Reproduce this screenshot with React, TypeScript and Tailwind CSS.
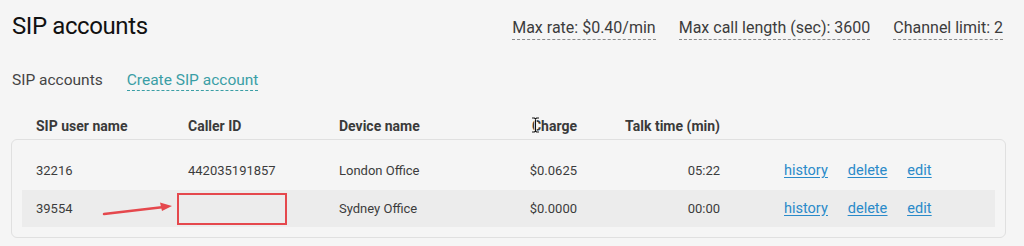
import React from "react";

const rows = [
  { user: "32216", caller: "442035191857", device: "London Office", charge: "$0.0625", talk: "05:22" },
  { user: "39554", caller: "", device: "Sydney Office", charge: "$0.0000", talk: "00:00" },
];

function Limit({ children }: { children: React.ReactNode }) {
  return (
    <span className="border-b border-dashed border-[#8a8a8a] pb-[1px] text-[#3c3c3c]">{children}</span>
  );
}

export default function App() {
  return (
    <div
      className="h-[246px] w-[1024px] overflow-hidden bg-[#f5f5f5] text-[#333]"
      style={{ fontFamily: "Roboto, 'Liberation Sans', sans-serif" }}
    >
      <div className="flex items-start justify-between pl-[12px] pr-[21px] pt-[10px]">
        <h1 className="text-[24px] leading-[32px] tracking-[-0.4px] text-[#111]">SIP accounts</h1>
        <div className="mt-[8px] flex gap-[23px] text-[16px] leading-[20px]">
          <Limit>Max rate: $0.40/min</Limit>
          <Limit>Max call length (sec): 3600</Limit>
          <Limit>Channel limit: 2</Limit>
        </div>
      </div>

      <div className="mt-[28px] flex gap-[24px] pl-[12px] text-[15.5px] leading-[20px]">
        <span className="text-[#444]">SIP accounts</span>
        <span className="border-b border-dashed border-[#3a9ea5] text-[#3a9ea5]">Create SIP account</span>
      </div>

      <div className="mt-[27px] flex pl-[36px] text-[14px] font-bold leading-[16px] text-[#3a3a3a]">
        <div className="w-[152px]">SIP user name</div>
        <div className="w-[151px]">Caller ID</div>
        <div className="w-[150px]">Device name</div>
        <div className="relative w-[88px] text-right">
          Charge
          <svg className="absolute left-[42px] top-[-1px]" width="9" height="16" viewBox="0 0 9 16">
            <path d="M1 1h2.5l1 1 1-1H8M4.5 2v12M1 15h2.5l1-1 1 1H8" fill="none" stroke="#fff" strokeWidth="2.4" />
            <path d="M1 1h2.5l1 1 1-1H8M4.5 2v12M1 15h2.5l1-1 1 1H8" fill="none" stroke="#111" strokeWidth="1.1" />
          </svg>
        </div>
        <div className="w-[143px] text-right">Talk time (min)</div>
      </div>

      <div className="ml-[11px] mr-[18px] mt-[5px] rounded-[6px] border border-[#e0e0e0] px-[10px] pb-[10px] pt-[12px] text-[13px] leading-[16px] text-[#3c3c3c]">
        {rows.map((r, i) => (
          <div
            key={r.user}
            className={`relative flex items-center pl-[14px] ${i === 1 ? "h-[37px] bg-[#ececec]" : "h-[38px]"}`}
          >
            <div className="w-[152px]">{r.user}</div>
            <div className="w-[151px]">{r.caller}</div>
            <div className="w-[150px]">{r.device}</div>
            <div className="w-[88px] text-right">{r.charge}</div>
            <div className="w-[143px] text-right">{r.talk}</div>
            <div className="ml-[64px] flex gap-[20px] text-[14.5px] text-[#2a8ac9] underline underline-offset-2">
              <a href="#">history</a>
              <a href="#">delete</a>
              <a href="#">edit</a>
            </div>
            {i === 1 && (
              <>
                <div className="absolute left-[155px] top-[3px] h-[32px] w-[110px] border-2 border-[#e5484d]" />
                <svg className="absolute left-[80px] top-[12px]" width="72" height="14" viewBox="0 0 72 14">
                  <path d="M2 12 L62 5" stroke="#e5484d" strokeWidth="2.5" strokeLinecap="round" />
                  <path d="M70 4 L58 0.5 L60 9 Z" fill="#e5484d" />
                </svg>
              </>
            )}
          </div>
        ))}
      </div>
    </div>
  );
}
